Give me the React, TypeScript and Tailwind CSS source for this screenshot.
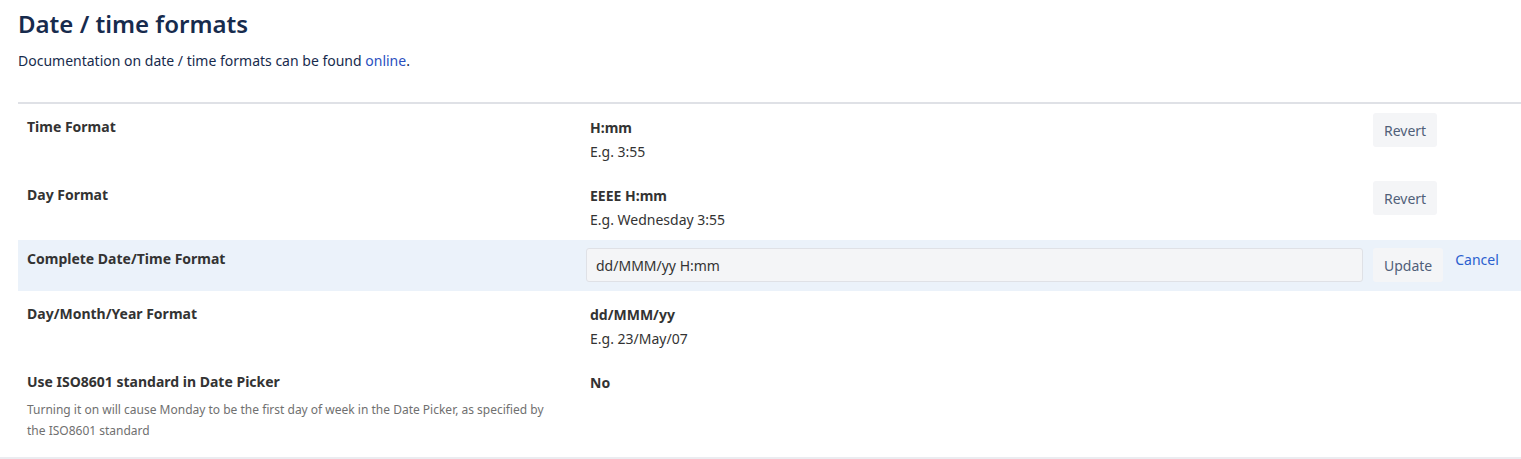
const font = { fontFamily: '"Noto Sans", "Open Sans", sans-serif' };

type Row = {
  label: string;
  value?: string;
  example?: string;
  note?: string;
  revert?: boolean;
  editing?: boolean;
};

const rows: Row[] = [
  { label: 'Time Format', value: 'H:mm', example: 'E.g. 3:55', revert: true },
  { label: 'Day Format', value: 'EEEE H:mm', example: 'E.g. Wednesday 3:55', revert: true },
  { label: 'Complete Date/Time Format', value: 'dd/MMM/yy H:mm', editing: true },
  { label: 'Day/Month/Year Format', value: 'dd/MMM/yy', example: 'E.g. 23/May/07' },
  {
    label: 'Use ISO8601 standard in Date Picker',
    value: 'No',
    note: 'Turning it on will cause Monday to be the first day of week in the Date Picker, as specified by the ISO8601 standard',
  },
];

const SettingRow = ({ row }: { row: Row }) => {
  if (row.editing) {
    return (
      <div className="grid grid-cols-[568px_779px_1fr] bg-[#ebf2fa] h-[51px]">
        <div className="pl-[9px] pt-[9px] text-[14px] leading-[20px] font-bold text-[#333333]">{row.label}</div>
        <div className="pt-[8px]">
          <input
            defaultValue={row.value}
            className="w-[777px] h-[34px] px-[9px] rounded-[3px] border border-[#dfe1e6] bg-[#f4f5f7] text-[14px] text-[#333333] outline-none"
            style={font}
          />
        </div>
        <div className="flex items-start pt-[8px] pl-[8px] gap-[12px]">
          <button className="h-[34px] px-[11px] rounded-[3px] bg-[#f4f5f7] text-[14px] text-[#505f79]" style={font}>
            Update
          </button>
          <a className="text-[14px] text-[#2a5fcf] leading-[20px] pt-[2px]">Cancel</a>
        </div>
      </div>
    );
  }

  return (
    <div className="grid grid-cols-[568px_779px_1fr]">
      <div className="pl-[9px] pt-[13px] pb-[16px]">
        <div className="text-[14px] leading-[20px] font-bold text-[#333333]">{row.label}</div>
        {row.note && (
          <div className="mt-[7px] text-[12px] leading-[21px] text-[#707070] pr-[26px]">{row.note}</div>
        )}
      </div>
      <div className="pl-[4px] pt-[14px] pb-[10px]">
        <div className="text-[14px] leading-[20px] font-bold text-[#333333]">{row.value}</div>
        {row.example && <div className="mt-[4px] text-[14px] leading-[20px] text-[#333333]">{row.example}</div>}
      </div>
      <div className="pl-[8px] pt-[9px]">
        {row.revert && (
          <button className="h-[34px] px-[11px] rounded-[3px] bg-[#f4f5f7] text-[14px] text-[#505f79]" style={font}>
            Revert
          </button>
        )}
      </div>
    </div>
  );
};

export default function App() {
  return (
    <div className="min-h-[459px] bg-white text-[#172b4d]" style={font}>
      <div className="pl-[18px] pt-[9px]">
        <h2 className="text-[24px] leading-[30px] font-semibold text-[#172b4d]">Date / time formats</h2>
        <p className="mt-[12px] text-[14px] leading-[20px]">
          Documentation on date / time formats can be found <a className="text-[#2a4fc0]">online</a>.
        </p>
        <div className="mt-[31px] border-t-2 border-[#dfe1e6]">
          {rows.map(row => (
            <SettingRow key={row.label} row={row} />
          ))}
        </div>
      </div>
      <div className="h-[2px] bg-[#ebecf0]" />
    </div>
  );
}
